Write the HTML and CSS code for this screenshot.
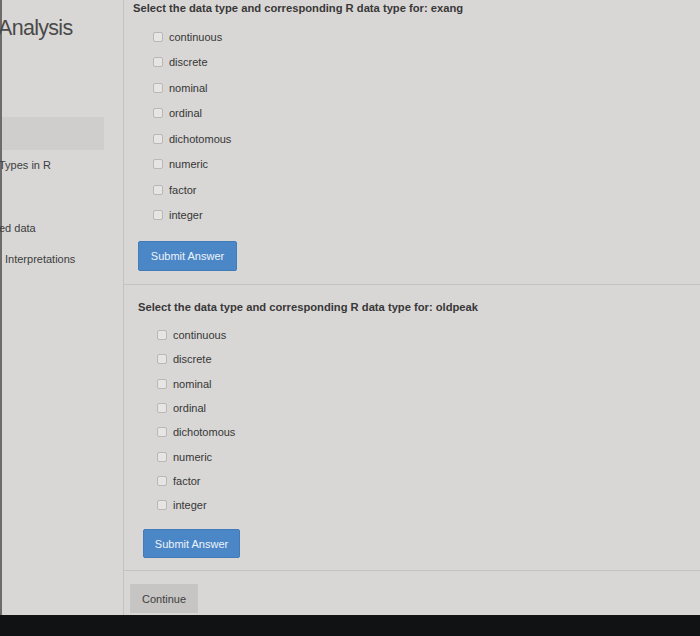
FILE: index.html
```html
<!DOCTYPE html>
<html lang="en">
<head>
  <meta charset="UTF-8" />
  <meta name="viewport" content="width=device-width, initial-scale=1.0"/>
  <title>Data Analysis - Quiz</title>
  <link rel="stylesheet" href="styles.css">
</head>
<body>

  <div class="screen">
    <aside class="sidebar">
      <h1 class="side-title">Analysis</h1>
      <div class="side-active"></div>
      <a class="side-link types">Types in R</a>
      <a class="side-link data">ed data</a>
      <a class="side-link interp">Interpretations</a>
    </aside>

    <main class="content">
      <section class="question first">
        <h2>Select the data type and corresponding R data type for: exang</h2>
        <ul class="options">
          <li><span class="box"></span>continuous</li>
          <li><span class="box"></span>discrete</li>
          <li><span class="box"></span>nominal</li>
          <li><span class="box"></span>ordinal</li>
          <li><span class="box"></span>dichotomous</li>
          <li><span class="box"></span>numeric</li>
          <li><span class="box"></span>factor</li>
          <li><span class="box"></span>integer</li>
        </ul>
        <button class="submit">Submit Answer</button>
      </section>

      <section class="question second">
        <h2>Select the data type and corresponding R data type for: oldpeak</h2>
        <ul class="options">
          <li><span class="box"></span>continuous</li>
          <li><span class="box"></span>discrete</li>
          <li><span class="box"></span>nominal</li>
          <li><span class="box"></span>ordinal</li>
          <li><span class="box"></span>dichotomous</li>
          <li><span class="box"></span>numeric</li>
          <li><span class="box"></span>factor</li>
          <li><span class="box"></span>integer</li>
        </ul>
        <button class="submit">Submit Answer</button>
      </section>

      <button class="continue">Continue</button>
    </main>
  </div>

  <div class="taskbar"></div>

</body>
</html>
```

FILE: styles.css
```css
* {
  margin: 0;
  padding: 0;
  box-sizing: border-box;
  font-family: "Liberation Sans", Arial, sans-serif;
}

body {
  width: 700px;
  height: 636px;
  overflow: hidden;
  background: #d8d7d5;
  color: #3a3a3a;
}

.screen {
  display: flex;
  height: 615px;
}

/* Left navigation */
.sidebar {
  width: 124px;
  flex-shrink: 0;
  border-right: 1px solid #c3c2c0;
  border-left: 2px solid #6d6c6a;
  display: flex;
  flex-direction: column;
}

.side-title {
  font-size: 21.5px;
  font-weight: normal;
  letter-spacing: -0.7px;
  color: #4a4a4a;
  margin: 15px 0 0 -4px;
  line-height: 26px;
}

.side-active {
  width: 102px;
  height: 33px;
  margin-top: 76px;
  background: #cfcecc;
}

.side-link {
  display: block;
  font-size: 11px;
  line-height: 14px;
  color: #3d3d3d;
}

.side-link.types {
  margin: 8px 0 0 -3px;
}

.side-link.data {
  margin: 49px 0 0 -3px;
}

.side-link.interp {
  margin: 17px 0 0 3px;
}

/* Question area */
.content {
  flex: 1;
  display: flex;
  flex-direction: column;
}

.question {
  border-bottom: 1px solid #c4c3c1;
}

.question h2 {
  font-size: 11.2px;
  font-weight: bold;
  line-height: 16px;
  color: #383838;
}

.question.first {
  padding: 0 0 13px 9px;
}

.question.second {
  padding: 14px 0 12px 14px;
}

.options {
  list-style: none;
  margin-top: 8px;
}

.options li {
  display: flex;
  align-items: center;
  font-size: 11px;
  color: #363636;
}

.first .options {
  margin-left: 20px;
}

.first .options li {
  height: 25.5px;
}

.second .options {
  margin-left: 19px;
}

.second .options li {
  height: 24.3px;
}

.box {
  width: 10px;
  height: 10px;
  margin-right: 6px;
  border: 1px solid #b9b8b6;
  border-radius: 2px;
  background: #e6e5e3;
}

.submit {
  display: block;
  margin: 13px 0 0 5px;
  width: 99px;
  height: 30px;
  background: #4b87c6;
  border: 1px solid #417bb8;
  border-radius: 2px;
  color: #eef3f9;
  font-size: 11px;
}

.second .submit {
  height: 29px;
  width: 97px;
  margin-top: 12px;
}

.continue {
  align-self: flex-start;
  margin: 13px 0 0 6px;
  width: 68px;
  height: 29px;
  background: #c6c5c3;
  border: none;
  color: #404040;
  font-size: 11px;
}

/* Dark strip along the bottom edge */
.taskbar {
  height: 21px;
  background: #111214;
}
```
